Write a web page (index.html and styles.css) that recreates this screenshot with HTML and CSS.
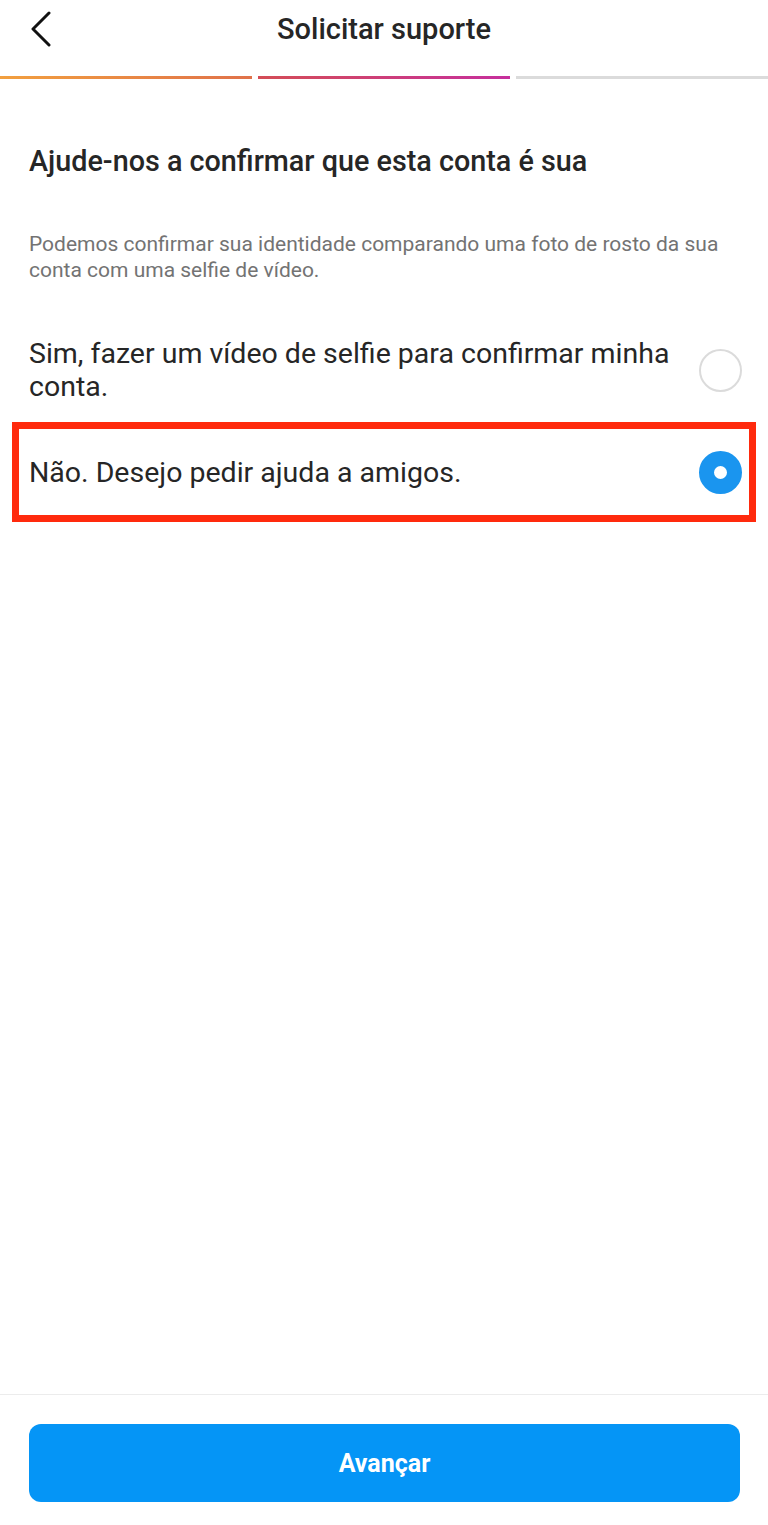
FILE: index.html
```html
<!DOCTYPE html>
<html lang="pt">
<head>
    <meta charset="UTF-8">
    <meta name="viewport" content="width=device-width, initial-scale=1.0">
    <title>Solicitar suporte</title>
    <link rel="stylesheet" href="styles.css">
</head>
<body>

    <div class="screen">
        <div class="header">
            <button class="back" aria-label="Voltar">
                <svg width="22" height="36" viewBox="0 0 22 36">
                    <path d="M19 2 L3 18 L19 34" fill="none" stroke="#111" stroke-width="3" stroke-linecap="round" stroke-linejoin="round"/>
                </svg>
            </button>
            <h1>Solicitar suporte</h1>
        </div>

        <div class="progress">
            <span class="step step-1"></span>
            <span class="step step-2"></span>
            <span class="step step-3"></span>
        </div>

        <div class="content">
            <h2>Ajude-nos a confirmar que esta conta é sua</h2>
            <p class="desc">Podemos confirmar sua identidade comparando uma foto de rosto da sua conta com uma selfie de vídeo.</p>

            <label class="option">
                <span class="option-text">Sim, fazer um vídeo de selfie para confirmar minha conta.</span>
                <span class="radio"></span>
            </label>

            <label class="option option-marked">
                <span class="option-text">Não. Desejo pedir ajuda a amigos.</span>
                <span class="radio checked"></span>
            </label>
        </div>

        <div class="footer">
            <button class="next">Avançar</button>
        </div>
    </div>

</body>
</html>
```

FILE: styles.css
```css
* {
    box-sizing: border-box;
}
body {
    margin: 0;
    font-family: Roboto, "Noto Sans", Arial, sans-serif;
    background: #fff;
    color: #262626;
}
.screen {
    height: 1525px;
    display: flex;
    flex-direction: column;
}
.header {
    height: 58px;
    display: flex;
    align-items: center;
    justify-content: center;
    position: relative;
}
.back {
    position: absolute;
    left: 30px;
    top: 11px;
    padding: 0;
    border: none;
    background: none;
    line-height: 0;
}
.header h1 {
    margin: 0;
    font-size: 29px;
    font-weight: 500;
    color: #262626;
}
.progress {
    margin-top: 18px;
    display: flex;
    gap: 6px;
}
.step {
    flex: 1;
    height: 3px;
}
.step-1 { background: linear-gradient(to right, #f2a03f, #e0724a); }
.step-2 { background: linear-gradient(to right, #d44d56, #c62f9d); }
.step-3 { background: #dbdbdb; }

.content {
    flex: 1;
    padding: 0 12px;
}
h2 {
    margin: 65px 17px 0;
    font-size: 28.75px;
    line-height: 34px;
    font-weight: 500;
    color: #262626;
}
.desc {
    margin: 53px 17px 0;
    font-size: 21px;
    line-height: 26px;
    color: #737373;
}
.option {
    display: flex;
    align-items: center;
    justify-content: space-between;
    gap: 20px;
    border: 7px solid transparent;
    padding: 0 7px 0 10px;
    font-size: 28.5px;
    line-height: 33px;
    color: #262626;
}
.option:first-of-type {
    margin-top: 47px;
}
.option-marked {
    margin-top: 12px;
    height: 100px;
    border-color: #ff2a0d;
}
.radio {
    flex: none;
    width: 43px;
    height: 43px;
    border-radius: 50%;
    border: 2px solid #dbdbdb;
}
.radio.checked {
    border: 15px solid #1a95ef;
    background: #fff;
}

.footer {
    border-top: 1px solid #ececec;
    padding: 29px 28px 23px 29px;
}
.next {
    width: 100%;
    height: 78px;
    border: none;
    border-radius: 12px;
    background: #0595f6;
    color: #fff;
    font-family: Roboto, "Noto Sans", Arial, sans-serif;
    font-size: 25px;
    font-weight: 700;
}
```
